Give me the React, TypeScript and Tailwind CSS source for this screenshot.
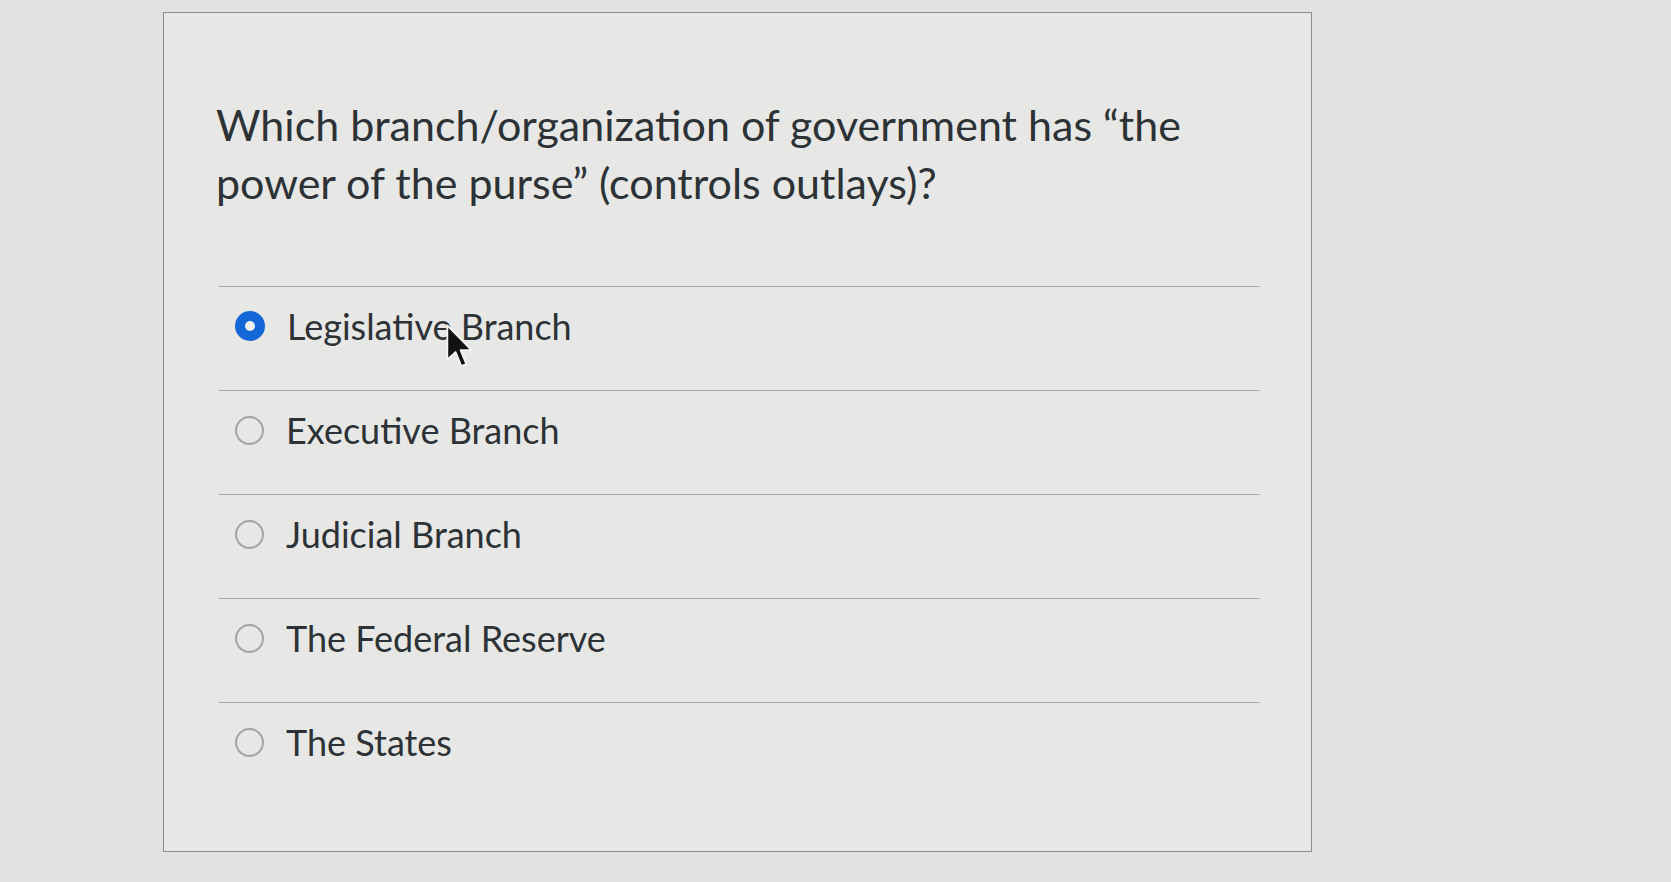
import { useState } from "react";

const options = [
  "Legislative Branch",
  "Executive Branch",
  "Judicial Branch",
  "The Federal Reserve",
  "The States",
];

function Radio({ checked }: { checked: boolean }) {
  if (checked) {
    return (
      <span className="flex h-[30px] w-[30px] shrink-0 items-center justify-center rounded-full bg-[#1467d6]">
        <span className="h-[10px] w-[10px] rounded-full bg-[#eef0ee]" />
      </span>
    );
  }
  return <span className="h-[29px] w-[29px] shrink-0 rounded-full border-2 border-[#a3a5a4]" />;
}

export default function App() {
  const [selected, setSelected] = useState(0);

  return (
    <div
      className="relative h-[882px] w-full overflow-hidden bg-[#e2e3e0] pt-[12px]"
      style={{ fontFamily: "Lato, 'Liberation Sans', sans-serif" }}
    >
      <div className="ml-[163px] h-[840px] w-[1149px] border border-[#8b8d8d] bg-[#e7e8e5] pt-[83px]">
        <p className="pl-[52px] text-[43px] leading-[58px] text-[#2c3236]">
          Which branch/organization of government has “the
          <br />
          power of the purse” (controls outlays)?
        </p>

        <div className="ml-[55px] mr-[51px] mt-[74px]">
          {options.map((label, i) => (
            <label
              key={label}
              onClick={() => setSelected(i)}
              className="block cursor-pointer border-t border-[#a8aaaa] pb-[46px] pt-[21px]"
            >
              <span className="flex h-[36px] items-center gap-[22px] pl-[16px]">
                <Radio checked={selected === i} />
                <span className="text-[36px] leading-[36px] text-[#2c3236]">{label}</span>
              </span>
            </label>
          ))}
        </div>
      </div>

      {/* mouse pointer */}
      <svg
        className="absolute left-[446px] top-[324px]"
        width="28"
        height="46"
        viewBox="0 0 22 36"
      >
        <path
          d="M1 1 L1 28 L7.5 22 L12 33 L16 31.5 L11.5 20.5 L20 20.5 Z"
          fill="#111"
          stroke="#f4f4f4"
          strokeWidth="1.5"
          strokeLinejoin="round"
        />
      </svg>
    </div>
  );
}
